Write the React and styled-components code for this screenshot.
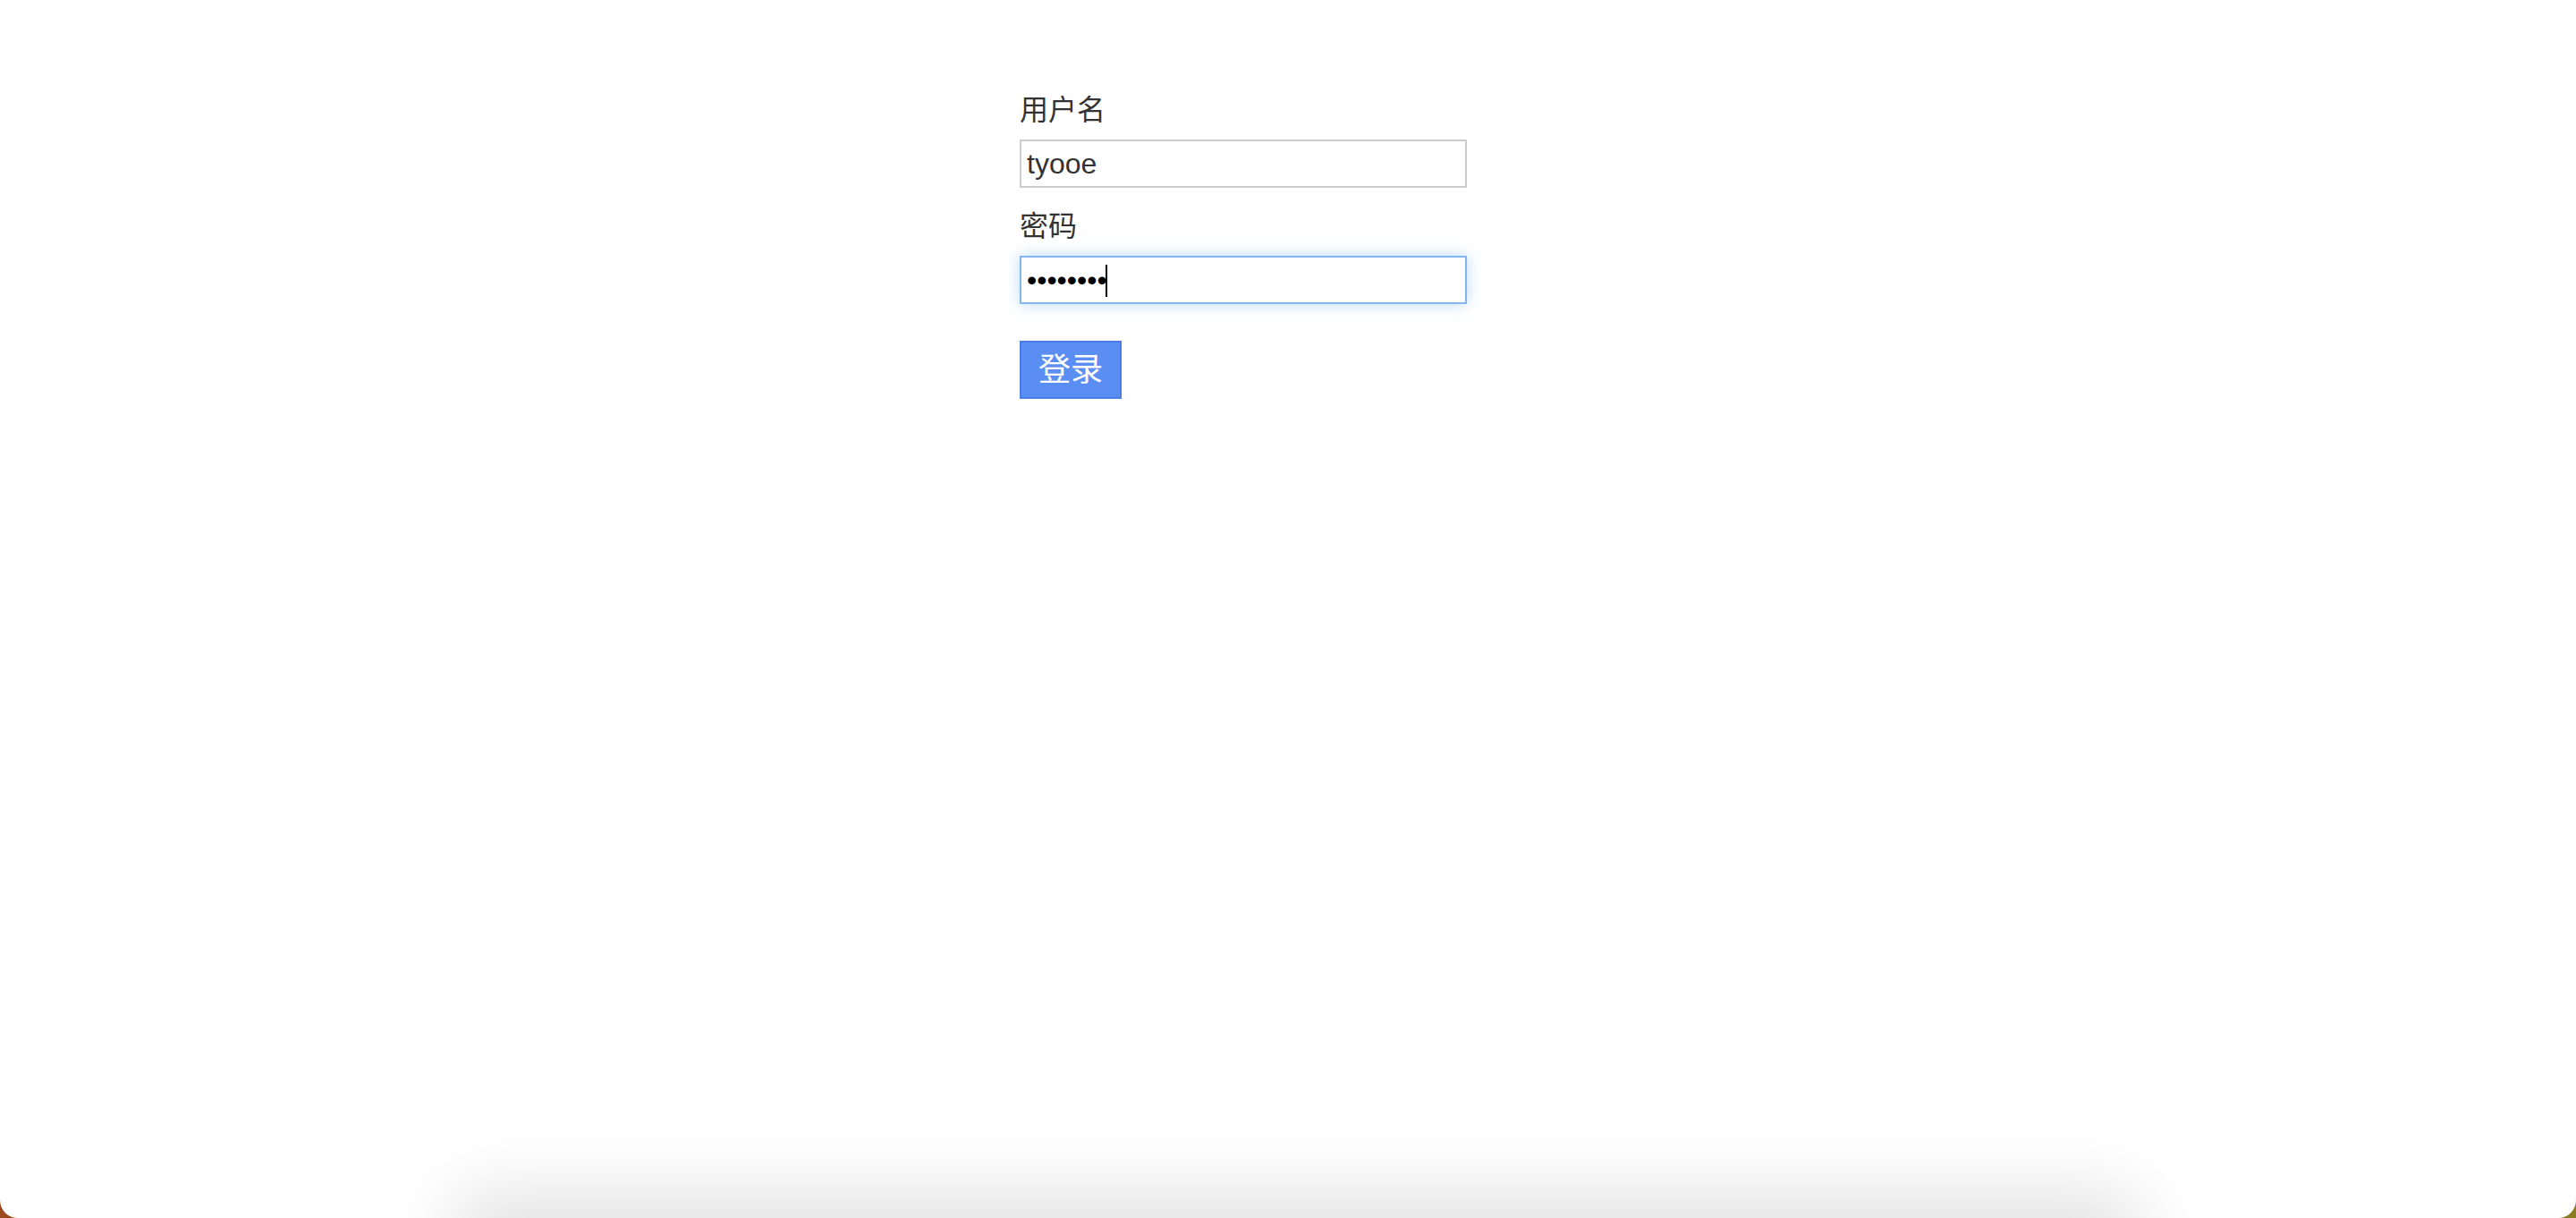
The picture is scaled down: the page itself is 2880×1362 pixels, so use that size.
import React from 'react';
import styled, { createGlobalStyle } from 'styled-components';

const GlobalStyle = createGlobalStyle`
  html, body {
    margin: 0;
    padding: 0;
    height: 100%;
  }

  body {
    background: linear-gradient(90deg, #9a4a1e 0%, #8f6a22 50%, #8a7c22 100%);
    font-family: "Liberation Sans", "Noto Sans CJK SC", sans-serif;
  }

  #root {
    height: 100%;
  }
`;

const Window = styled.div`
  position: relative;
  height: 100vh;
  background: #ffffff;
  border-radius: 0 0 20px 20px;
  overflow: hidden;

  /* shadow cast up from below the window edge */
  &::after {
    content: '';
    position: absolute;
    left: 530px;
    right: 510px;
    bottom: -40px;
    height: 40px;
    border-radius: 40px;
    background: rgba(0, 0, 0, 0.14);
    box-shadow: 0 0 80px 28px rgba(0, 0, 0, 0.12);
  }
`;

const LoginForm = styled.form`
  width: 600px;
  margin: 0 auto;
  padding-top: 103px;
  box-sizing: border-box;
`;

const Field = styled.div`
  margin-bottom: 23px;
`;

const Label = styled.label`
  display: block;
  font-size: 32px;
  line-height: 40px;
  color: #333333;
  margin-bottom: 13px;
`;

const InputWrap = styled.div`
  position: relative;
  width: 500px;
`;

const TextInput = styled.input`
  display: block;
  width: 500px;
  height: 54px;
  box-sizing: border-box;
  margin: 0;
  padding: 0 6px;
  font-family: "Liberation Sans", "Noto Sans CJK SC", sans-serif;
  font-size: 32px;
  color: ${(p) => (p.$focused ? '#000000' : '#333333')};
  background: #ffffff;
  border: 2px solid ${(p) => (p.$focused ? '#84b5ec' : '#cccccc')};
  border-radius: 0;
  box-shadow: ${(p) => (p.$focused ? '0 0 16px rgba(102, 175, 233, 0.45)' : 'none')};
  outline: none;
`;

const Caret = styled.span`
  position: absolute;
  left: 96px;
  top: 10px;
  width: 2px;
  height: 36px;
  background: #000000;
`;

const ButtonRow = styled.div`
  padding-top: 18px;
`;

const SubmitButton = styled.button`
  height: 65px;
  padding: 0 19px;
  margin: 0;
  font-family: "Liberation Sans", "Noto Sans CJK SC", sans-serif;
  font-size: 36px;
  line-height: 1;
  color: #ffffff;
  background: #5b8ef3;
  border: 2px solid #4a7de8;
  border-radius: 0;
  cursor: pointer;
`;

const App = () => {
  const handleSubmit = (e) => {
    e.preventDefault();
  };

  return (
    <>
      <GlobalStyle />
      <Window>
        <LoginForm onSubmit={handleSubmit}>
          <Field>
            <Label htmlFor="username">用户名</Label>
            <InputWrap>
              <TextInput id="username" type="text" defaultValue="tyooe" readOnly />
            </InputWrap>
          </Field>
          <Field>
            <Label htmlFor="password">密码</Label>
            <InputWrap>
              <TextInput
                id="password"
                type="password"
                defaultValue="tyooe123"
                readOnly
                $focused
              />
              <Caret />
            </InputWrap>
          </Field>
          <ButtonRow>
            <SubmitButton type="submit">登录</SubmitButton>
          </ButtonRow>
        </LoginForm>
      </Window>
    </>
  );
};

export default App;
